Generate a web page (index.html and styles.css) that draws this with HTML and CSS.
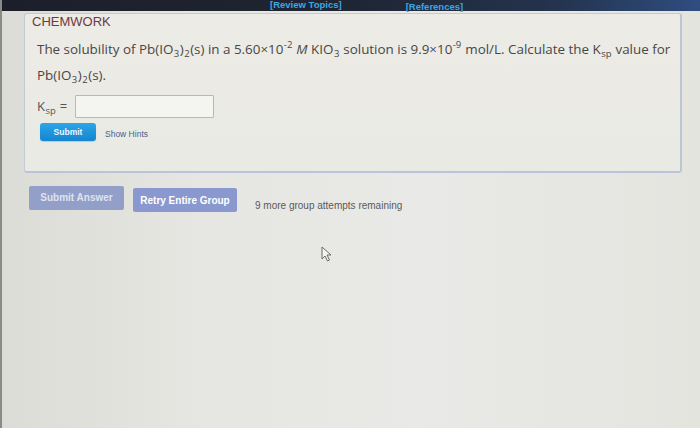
FILE: index.html
```html
<!DOCTYPE html>
<html>
<head>
<meta charset="utf-8">
<link rel="stylesheet" href="styles.css">
</head>
<body>
<div class="topbar">
  <span class="toplink review">[Review Topics]</span>
  <span class="toplink refs">[References]</span>
</div>
<div class="page">
  <div class="card">
    <div class="brand">CHEMWORK</div>
    <p class="question">The solubility of Pb(IO<sub>3</sub>)<sub>2</sub>(s) in a 5.60×10<sup>-2</sup> <i>M</i> KIO<sub>3</sub> solution is 9.9×10<sup>-9</sup> mol/L. Calculate the K<sub>sp</sub> value for Pb(IO<sub>3</sub>)<sub>2</sub>(s).</p>
    <div class="answer">
      <span class="label">K<sub>sp</sub> =</span>
      <span class="input"></span>
    </div>
    <div class="actions">
      <span class="btn-submit">Submit</span>
      <span class="hints">Show Hints</span>
    </div>
  </div>
  <div class="group">
    <span class="btn-group btn-answer">Submit Answer</span>
    <span class="btn-group btn-retry">Retry Entire Group</span>
    <span class="remaining">9 more group attempts remaining</span>
  </div>
  <svg class="cursor" width="12" height="16" viewBox="0 0 12 16"><path d="M1 1 L1 13 L4 10 L6.5 15 L8.5 14 L6 9 L10 9 Z" fill="#f4f4f2" stroke="#6a6a6a" stroke-width="1"/></svg>
</div>
</body>
</html>
```
FILE: styles.css
```css
html, body {
  margin: 0;
  padding: 0;
}
body {
  width: 700px;
  height: 428px;
  overflow: hidden;
  background: linear-gradient(90deg, #dcdcd7 0%, #e6e6e2 30%, #e9eae7 60%, #e4e4df 100%);
  font-family: "Open Sans", "Liberation Sans", sans-serif;
  color: #4a4a4a;
  border-left: 2px solid #8a8a88;
  box-sizing: border-box;
  position: relative;
}
.topbar {
  height: 11px;
  background: linear-gradient(90deg, #1c1f2a 0%, #1f2533 50%, #24344f 80%, #2f4d80 100%);
  display: flex;
  align-items: flex-start;
  font-family: "Liberation Sans", sans-serif;
  font-weight: bold;
  font-size: 9.5px;
  line-height: 9px;
}
.toplink {
  color: #3aa8e6;
}
.review {
  margin-left: 268px;
}
.refs {
  margin-left: 64px;
  margin-top: 2px;
}
.page {
  padding: 2px 0 0 22px;
}
.card {
  width: 658px;
  height: 160px;
  box-sizing: border-box;
  border: 1px solid #c4c9d6;
  border-right: 2px solid #bcc4d6;
  border-bottom: 2px solid #bac3da;
  border-radius: 3px;
  background: linear-gradient(180deg, #ecebe6 0%, #eaeae5 100%);
  padding: 0 0 0 7px;
}
.brand {
  font-family: "Liberation Sans", sans-serif;
  font-size: 13px;
  color: #6b3a3e;
  margin-top: 0;
  line-height: 16px;
}
.question {
  margin: 6px 0 0 5px;
  font-size: 13.4px;
  line-height: 26px;
  width: 646px;
  color: #474747;
}
sub, sup {
  font-size: 9.5px;
  line-height: 1;
  padding: 0 0.5px;
}
sub {
  vertical-align: -3px;
}
sup {
  vertical-align: 6px;
}
.answer {
  display: flex;
  align-items: center;
  margin: 7px 0 0 5px;
}
.label {
  font-size: 13px;
  color: #555;
  width: 38px;
}
.input {
  width: 137px;
  height: 21px;
  border: 1px solid #b8b8b8;
  background: #f4f4f1;
  border-radius: 1px;
}
.actions {
  display: flex;
  align-items: center;
  margin: 5px 0 0 8px;
}
.btn-submit {
  width: 56px;
  height: 18px;
  border-radius: 3px;
  background: linear-gradient(180deg, #2aa6e8 0%, #1585cf 100%);
  color: #eef6ff;
  font-family: "Liberation Sans", sans-serif;
  font-weight: bold;
  font-size: 8.5px;
  display: flex;
  align-items: center;
  justify-content: center;
  box-shadow: 0 1px 1px rgba(0,0,0,0.15);
}
.hints {
  margin-left: 9px;
  margin-top: 3px;
  font-family: "Liberation Sans", sans-serif;
  font-size: 8.5px;
  color: #4b5f8e;
}
.group {
  display: flex;
  align-items: center;
  margin: 10px 0 0 5px;
}
.btn-group {
  height: 24px;
  display: flex;
  align-items: center;
  justify-content: center;
  font-family: "Liberation Sans", sans-serif;
  font-weight: bold;
  font-size: 10px;
  border-radius: 2px;
}
.btn-answer {
  width: 95px;
  background: #929fc9;
  color: #dfe3ef;
}
.btn-retry {
  width: 104px;
  margin-left: 9px;
  margin-top: 5px;
  background: #8999cf;
  color: #ffffff;
}
.remaining {
  margin-left: 18px;
  margin-top: 16px;
  font-family: "Liberation Sans", sans-serif;
  font-size: 10px;
  color: #5a5a5a;
}
.cursor {
  position: absolute;
  left: 319px;
  top: 246px;
}
```
